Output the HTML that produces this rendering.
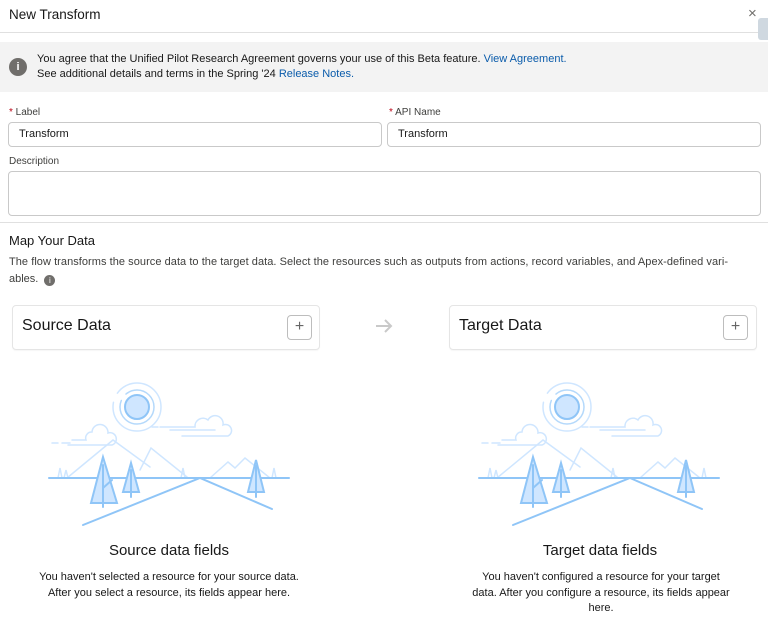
<!DOCTYPE html>
<html><head><style>
*{margin:0;padding:0;box-sizing:border-box}
body{width:768px;height:626px;overflow:hidden;background:#fff;font-family:"Liberation Sans",sans-serif;color:#181818;position:relative}
.a{position:absolute;white-space:nowrap}
a{color:#0b5cab;text-decoration:none}
.inp{position:absolute;border:1px solid #c9c9c9;border-radius:4px;background:#fff;font-size:11px;padding-left:10px;line-height:23px}
.lbl{font-size:10px;color:#3e3e3c}
.box{position:absolute;border:1px solid #e5e5e5;border-radius:4px;height:45px;top:305px;box-shadow:0 1px 1px rgba(0,0,0,.04)}
.box span{position:absolute;left:9px;top:11px;font-size:16px}
.plus{position:absolute;top:9px;width:25px;height:25px;border:1px solid #bdbdbd;border-radius:4px;font-size:16px;font-weight:300;color:#666;text-align:center;line-height:22px}
.p{font-size:11px;color:#181818;text-align:center;line-height:15.5px;position:absolute}
</style></head><body>
<div class="a" style="left:9px;top:7px;font-size:13.5px">New Transform</div>
<div class="a" style="left:748px;top:5px;font-size:15px;color:#706e6b">×</div>
<div style="position:absolute;left:0;top:32px;width:768px;height:1px;background:#e0e0e0"></div>
<div style="position:absolute;left:758px;top:18px;width:10px;height:22px;background:#cfd8e0;border-radius:3px 0 0 3px"></div>
<div style="position:absolute;left:0;top:42px;width:768px;height:50px;background:#f3f3f3"></div>
<div style="position:absolute;left:9px;top:58px;width:18px;height:18px;border-radius:50%;background:#706e6b;color:#fff;font-size:11px;font-weight:bold;text-align:center;line-height:18px">i</div>
<div class="a" style="left:37px;top:53px;font-size:11px">You agree that the Unified Pilot Research Agreement governs your use of this Beta feature. <a>View Agreement.</a></div>
<div class="a" style="left:37px;top:68px;font-size:11px">See additional details and terms in the Spring '24 <a>Release Notes.</a></div>
<div class="a lbl" style="left:9px;top:107px"><span style="color:#ba0517">*</span> Label</div>
<div class="a lbl" style="left:389px;top:107px"><span style="color:#ba0517">*</span> API Name</div>
<div class="inp" style="left:8px;top:122px;width:374px;height:25px">Transform</div>
<div class="inp" style="left:387px;top:122px;width:374px;height:25px">Transform</div>
<div class="a lbl" style="left:9px;top:156px">Description</div>
<div class="inp" style="left:8px;top:171px;width:753px;height:45px"></div>
<div style="position:absolute;left:0;top:222px;width:768px;height:1px;background:#e0e0e0"></div>
<div class="a" style="left:9px;top:233px;font-size:13px">Map Your Data</div>
<div class="a" style="left:9px;top:256px;font-size:11px;color:#3e3e3c;letter-spacing:0.05px">The flow transforms the source data to the target data. Select the resources such as outputs from actions, record variables, and Apex-defined vari-</div>
<div class="a" style="left:9px;top:273px;font-size:11px;color:#3e3e3c">ables. <span style="display:inline-block;width:11px;height:11px;border-radius:50%;background:#706e6b;color:#fff;font-size:8px;text-align:center;line-height:11px;vertical-align:-1px;margin-left:3px">i</span></div>
<div class="box" style="left:12px;width:308px"><span>Source Data</span><div class="plus" style="left:274px">+</div></div>
<div class="box" style="left:449px;width:308px"><span>Target Data</span><div class="plus" style="left:273px">+</div></div>
<svg style="position:absolute;left:374px;top:318px" width="20" height="16"><path d="M2 8 H17 M11 2 L17 8 L11 14" fill="none" stroke="#c9c9c9" stroke-width="2"/></svg>
<svg style="position:absolute;left:0;top:0" width="768" height="626">
<defs><g id="ill" fill="none" stroke-linecap="round">
<circle cx="137" cy="407" r="12" fill="#cfe6ff" stroke="#8fc5f7" stroke-width="2"/>
<circle cx="137" cy="407" r="17" stroke="#b5d9fb" stroke-width="1.5" stroke-dasharray="60 8"/>
<circle cx="137" cy="407" r="24" stroke="#cfe6ff" stroke-width="1.5" stroke-dasharray="80 10"/>
<g stroke="#cfe6ff" stroke-width="1.5">
<path d="M67 478 L113 440 L150 467 M140 470 L151 448 L187 477 M52 443 L58 443 M62 443 L70 443"/>
<path d="M68 445 H112 A6 6 0 0 0 108 433 A8 8 0 0 0 92 432 A6 6 0 0 0 86 440 H72"/>
<path d="M170 430 H215 M182 436 H228 A5 5 0 0 0 223 425 A8 8 0 0 0 208 420 A8 8 0 0 0 195 427 H168 M168 427 H160 M158 427 H152"/>
<path d="M210 478 L228 462 L235 468 L245 458 L270 478"/>
<path d="M58 478 L60 468 L62 478 M64 478 L66 470 L68 478 M181 478 L183 468 L185 478 M272 478 L274 468 L276 478"/>
</g>
<g stroke="#8fc5f7" stroke-width="2">
<path d="M49 478 H289"/>
<path d="M83 525 L200 478 L272 509"/>
<path d="M103 457 L91 503 H117 Z" fill="#cfe6ff"/><path d="M103 465 V507 M103 488 L112 480"/>
<path d="M131 463 L123 492 H139 Z" fill="#cfe6ff"/><path d="M131 470 V497"/>
<path d="M256 460 L248 492 H264 Z" fill="#cfe6ff"/><path d="M256 466 V497"/>
</g></g></defs>
<use href="#ill"/>
<use href="#ill" x="430"/>
</svg>
<div class="a" style="left:0;width:338px;text-align:center;top:542px;font-size:15px">Source data fields</div>
<div class="p" style="left:19px;width:300px;top:570px">You haven't selected a resource for your source data.<br>After you select a resource, its fields appear here.</div>
<div class="a" style="left:430px;width:340px;text-align:center;top:542px;font-size:15px">Target data fields</div>
<div class="p" style="left:470px;width:262px;top:570px">You haven't configured a resource for your target data. After you configure a resource, its fields appear here.</div>
</body></html>
